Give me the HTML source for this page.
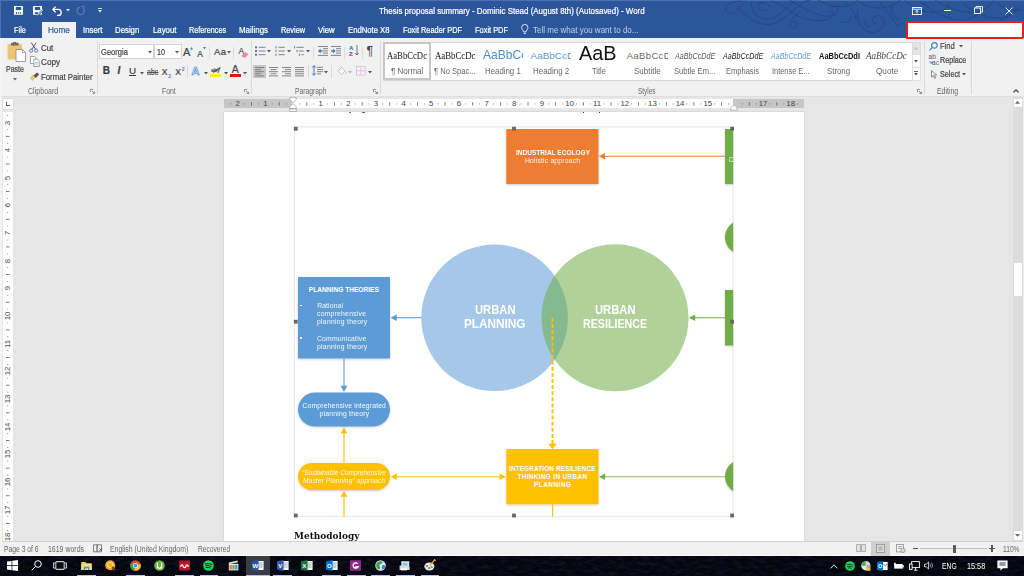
<!DOCTYPE html>
<html lang="en"><head>
<meta charset="utf-8">
<title>Thesis proposal summary - Word</title>
<style>
*{box-sizing:border-box;margin:0;padding:0}
html,body{width:1024px;height:576px;overflow:hidden;background:#e6e6e6}
body{position:relative;font-family:"Liberation Sans",sans-serif;font-size:8px;color:#444;line-height:1}
.a{position:absolute}
.t{position:absolute;white-space:nowrap;line-height:10px;height:10px}
svg{position:absolute;overflow:visible}
#titlebar{left:0;top:0;width:1024px;height:38px;background:#2b579a}
#titlebar .t{color:#fff;font-size:8.3px;-webkit-text-stroke:.2px currentColor}
#ribbon{left:0;top:38px;width:1024px;height:58.6px;background:#f1f1f1;border-bottom:1px solid #dedede}
#ribbon .t{font-size:8.3px;color:#444;-webkit-text-stroke:.2px currentColor}
#ribbon .g{color:#666;-webkit-text-stroke:0}
#ribbon .lb{margin-top:-.6px}
.sep{position:absolute;width:1px;background:#dadada}
#doc{left:0;top:97px;width:1024px;height:444px;background:#e6e6e6}
#page{left:224px;top:112px;width:580px;height:429px;background:#fff}
#status{left:0;top:541.2px;width:1024px;height:15px;background:#f1f1f1;border-top:1px solid #d2d2d2;border-bottom:1px solid #fafafa}
#status .t{font-size:8.3px;color:#666;top:2px}
#taskbar{left:0;top:556px;width:1024px;height:20px;background:#04050a}
</style>
</head>
<body>
<div id="titlebar" class="a">
  <div class="a" style="left:0;top:0;width:1024px;height:1px;background:#4a72ae"></div>
  <div class="a" style="left:0;top:0;width:1px;height:38px;background:#4a72ae"></div>
  <!-- decorative swirls -->
  <svg width="350" height="38" style="left:674px;top:0" viewBox="674 0 350 38" fill="none" stroke="#21467f" stroke-width="1" stroke-linecap="round" opacity="0.85">
    <path d="M742 1 C736 1 726 3 725.500 8.500 C725 13 731 14.500 735 12 C740 9 742 4 746 1"></path>
    <path d="M737 8 C746 13 752 24 766 24.500 C782 25 790 12 802 3 C805 1 808 0 811 0"></path>
    <path d="M752 2 C750 8 754 17 764 19 C776 21 784 10 793 2"></path>
    <path d="M756 4 C760 1 768 2 769 6 C770 10 764 12 760 9 C757 7 758 4 762 3"></path>
    <path d="M772 1 C782 4 790 12 798 16 C810 22 826 22 832 17 C836 13 832 10 828 12"></path>
    <path d="M800 12 C794 16 789 22 790 26 C791 30 797 29 797 25 C797 22 794 21 792 22"></path>
    <path d="M790 0 C800 6 812 14 824 16 C832 17 838 14 838 10 C838 6 832 5 829 8"></path>
    <path d="M818 0 C824 4 836 8 846 6 C852 5 856 2 858 0"></path>
    <path d="M842 22 C848 24 852 20 850 17"></path>
    <path d="M845 2 C852 8 856 14 856 20"></path>
    <path d="M858 10 C856 16 858 26 866 31 C874 35 884 30 884 22 C884 16 878 14 874 17 C870 20 873 25 877 23"></path>
    <path d="M866 20 C864 23 866 27 870 26"></path>
    <path d="M860 2 C868 8 880 10 890 6 C894 4 898 2 900 0"></path>
    <path d="M880 2 C886 10 892 18 896 24 C898 27 902 26 902 23"></path>
    <path d="M893 4 C890 10 892 18 900 20"></path>
    <path d="M905 0 C912 8 924 14 938 12 C946 11 950 6 948 2"></path>
    <path d="M920 2 C930 8 944 20 960 20 C972 20 980 14 988 6"></path>
    <path d="M935 0 C945 6 960 14 975 12 C984 11 990 6 994 0"></path>
    <path d="M962 2 C970 10 984 18 998 18 C1008 18 1016 12 1022 6"></path>
    <path d="M996 2 C1002 8 1012 12 1022 10"></path>
    <path d="M1000 20 C1008 18 1014 14 1016 8"></path>
  </svg>
  <!-- quick access toolbar icons -->
  <svg width="9" height="9" style="left:14.2px;top:5.6px" viewBox="0 0 9 9"><rect x="0" y="0" width="9" height="8.8" rx="0.6" fill="#fff"></rect><rect x="1.8" y="0.9" width="5.4" height="3.2" fill="#2b579a"></rect><rect x="1.8" y="6.2" width="5.4" height="1.7" fill="#2b579a"></rect><rect x="3" y="6.2" width="1.2" height="1.7" fill="#fff"></rect><rect x="5" y="6.2" width="1.2" height="1.7" fill="#fff"></rect></svg>
  <svg width="11" height="10" style="left:33.2px;top:5.6px" viewBox="0 0 11 10"><rect x="0" y="0" width="9" height="8.8" rx="0.6" fill="#fff"></rect><rect x="1.8" y="0.9" width="5.4" height="3.2" fill="#2b579a"></rect><rect x="1.8" y="6.2" width="3" height="1.7" fill="#2b579a"></rect><path d="M4.4 9.4l5.4-5.4" stroke="#2b579a" stroke-width="2.2"></path><path d="M4.2 9.4l5.8-5.8" stroke="#fff" stroke-width="1"></path></svg>
  <svg width="11" height="10" style="left:52px;top:6px" viewBox="0 0 11 10" fill="none" stroke="#fff" stroke-width="1.3"><path d="M1 3.4h5.2a3 3 0 0 1 0 6H5"></path><path d="M3.6 0.6L0.9 3.4l2.7 2.8"></path></svg>
  <svg width="4" height="3" style="left:66px;top:9px" viewBox="0 0 4 3"><path d="M0 0h4l-2 2.4z" fill="#dfe6f1"></path></svg>
  <svg width="10" height="10" style="left:76px;top:6px" viewBox="0 0 10 10" fill="none" stroke="#5c7fb4" stroke-width="1.1"><path d="M4 1.4a3.6 3.6 0 1 0 3.4 1.4"></path><path d="M5 0.5h3v3"></path></svg>
  <svg width="4" height="5" style="left:98px;top:8px" viewBox="0 0 4 5"><rect x="0" y="0" width="4" height="0.9" fill="#dfe6f1"></rect><path d="M0 2h4l-2 2.4z" fill="#dfe6f1"></path></svg>
  <!-- title -->
  <div class="t" style="top: 6px; left: 378.5px; transform: scaleX(0.956); transform-origin: 0px 50%;">Thesis proposal summary - Dominic Stead (August 8th) (Autosaved) - Word</div>
  <!-- window controls -->
  <svg width="10" height="8" style="left:912px;top:7px" viewBox="0 0 10 8" fill="none" stroke="#fff" stroke-width="0.9"><rect x="0.5" y="0.5" width="9" height="7"></rect><path d="M0.5 2.2h9"></path><path d="M5 6.4V3.4M3.6 4.8L5 3.4l1.4 1.4"></path></svg>
  <div class="a" style="left:944px;top:10px;width:7px;height:1px;background:#fff"></div>
  <svg width="9" height="8" style="left:974px;top:6px" viewBox="0 0 9 8" fill="none" stroke="#fff" stroke-width="0.9"><rect x="0.5" y="2" width="6" height="5.5"></rect><path d="M2 2V0.5h6.5v5.5H6.5"></path></svg>
  <svg width="8" height="8" style="left:1005px;top:7px" viewBox="0 0 8 8" fill="none" stroke="#fff" stroke-width="0.9"><path d="M0.5 0.5l7 7M7.5 0.5l-7 7"></path></svg>
  <!-- redacted account box -->
  <div class="a" style="left:906px;top:21.2px;width:118.3px;height:17.6px;background:#fff;border:2px solid #ee1c1c;z-index:5"></div>
  <!-- tabs -->
  <div class="a" style="left:42px;top:22px;width:34px;height:16px;background:#f1f1f1"></div>
  <div class="t tab" style="top: 25px; left: 14px; transform: scaleX(0.897); transform-origin: 0px 50%;">File</div>
  <div class="t tab" style="top: 25px; color: rgb(43, 87, 154); left: 48px; transform: scaleX(0.98); transform-origin: 0px 50%;">Home</div>
  <div class="t tab" style="top: 25px; left: 82.5px; transform: scaleX(0.939); transform-origin: 0px 50%;">Insert</div>
  <div class="t tab" style="top: 25px; left: 115px; transform: scaleX(0.941); transform-origin: 0px 50%;">Design</div>
  <div class="t tab" style="top: 25px; left: 152.5px; transform: scaleX(0.943); transform-origin: 0px 50%;">Layout</div>
  <div class="t tab" style="top: 25px; left: 188.7px; transform: scaleX(0.874); transform-origin: 0px 50%;">References</div>
  <div class="t tab" style="top: 25px; left: 239px; transform: scaleX(0.953); transform-origin: 0px 50%;">Mailings</div>
  <div class="t tab" style="top: 25px; left: 281px; transform: scaleX(0.882); transform-origin: 0px 50%;">Review</div>
  <div class="t tab" style="top: 25px; left: 318px; transform: scaleX(0.936); transform-origin: 0px 50%;">View</div>
  <div class="t tab" style="top: 25px; left: 347.5px; transform: scaleX(0.927); transform-origin: 0px 50%;">EndNote X8</div>
  <div class="t tab" style="top: 25px; left: 402.5px; transform: scaleX(0.888); transform-origin: 0px 50%;">Foxit Reader PDF</div>
  <div class="t tab" style="top: 25px; left: 475px; transform: scaleX(0.895); transform-origin: 0px 50%;">Foxit PDF</div>
  <svg width="7.6" height="11" style="left:521.2px;top:24px" viewBox="0 0 7 10" fill="none" stroke="#e6ecf5" stroke-width="0.85"><path d="M2.3 7.2C2.3 5.6 0.6 5 0.6 3.2a2.9 2.9 0 0 1 5.8 0C6.4 5 4.7 5.6 4.7 7.2z"></path><path d="M2.4 8.6h2.2"></path></svg>
  <div class="t tab" style="top: 25px; color: rgb(195, 208, 230); -webkit-text-stroke: 0px; left: 532.5px; transform: scaleX(0.965); transform-origin: 0px 50%;">Tell me what you want to do...</div>
</div>
<div id="ribbon" class="a">
<!-- coordinates inside ribbon are page-y minus 38 -->
<!-- Clipboard -->
<svg width="20" height="20" style="left:7px;top:4px" viewBox="0 0 20 20">
  <rect x="0.5" y="2" width="14.5" height="15.5" rx="0.8" fill="#edc374"></rect>
  <rect x="4" y="0.8" width="7.5" height="2.6" rx="0.5" fill="#6b6b6b"></rect>
  <rect x="6.2" y="0" width="3" height="1.6" rx="0.5" fill="#6b6b6b"></rect>
  <path d="M9 7.5h6.5l3 3V19.5H9z" fill="#fff" stroke="#8a8a8a" stroke-width="0.8"></path>
  <path d="M15.5 7.5v3h3" fill="none" stroke="#8a8a8a" stroke-width="0.7"></path>
</svg>
<div class="t" style="top: 26px; left: 6px; transform: scaleX(0.848); transform-origin: 0px 50%;">Paste</div>
<svg width="4" height="3" style="left:13px;top:40px" viewBox="0 0 4 3"><path d="M0 0h4l-2 2.4z" fill="#666"></path></svg>
<svg width="10" height="11" style="left:29px;top:4px" viewBox="0 0 10 11" fill="none"><path d="M2.2 0.6l4.6 7M7.2 0.6l-4.6 7" stroke="#555" stroke-width="1"></path><circle cx="2.2" cy="8.6" r="1.6" stroke="#3f7fbf" stroke-width="0.9"></circle><circle cx="7.2" cy="8.6" r="1.6" stroke="#3f7fbf" stroke-width="0.9"></circle></svg>
<div class="t" style="top: 5px; left: 41px; transform: scaleX(0.952); transform-origin: 0px 50%;">Cut</div>
<svg width="10" height="11" style="left:30px;top:18px" viewBox="0 0 10 11"><path d="M0.5 0.5h3.8l1.6 1.6V7.5H0.5z" fill="#fff" stroke="#8a8a8a" stroke-width="0.8"></path><path d="M3.8 3.2h3.8l1.6 1.6V10.5H3.8z" fill="#fff" stroke="#8a8a8a" stroke-width="0.8"></path><path d="M5 6.4h3M5 8h3" stroke="#7fa8d6" stroke-width="0.7"></path></svg>
<div class="t" style="top: 19px; left: 41px; transform: scaleX(0.981); transform-origin: 0px 50%;">Copy</div>
<svg width="11" height="10" style="left:29px;top:34px" viewBox="0 0 11 10"><path d="M0.6 6l3-3.2 3 2.8-3 3.4z" fill="#edc374"></path><path d="M4.4 3.4l3.8-3 2 2-3.4 3.6z" fill="#555"></path></svg>
<div class="t" style="top: 33.5px; left: 41px; transform: scaleX(0.938); transform-origin: 0px 50%;">Format Painter</div>
<div class="t g" style="top: 48.2px; left: 28.3px; transform: scaleX(0.853); transform-origin: 0px 50%;">Clipboard</div>
<svg width="5" height="5" style="left:90px;top:51px" viewBox="0 0 5 5" fill="none" stroke="#777" stroke-width="0.8"><path d="M0.4 3V0.4H3"></path><path d="M2 2l2.4 2.4M4.6 2.6v2h-2"></path></svg>
<div class="sep" style="left:97px;top:3px;height:53px"></div>

<!-- Font -->
<div class="a" style="left:99px;top:6px;width:55px;height:15px;background:#fff;border:1px solid #d4d4d4"></div>
<div class="a" style="left:154px;top:6px;width:28px;height:15px;background:#fff;border:1px solid #d4d4d4"></div>
<div class="t" style="top: 9px; left: 101px; transform: scaleX(0.914); transform-origin: 0px 50%;">Georgia</div>
<svg width="4" height="3" style="left:148px;top:13px" viewBox="0 0 4 3"><path d="M0 0h4l-2 2.4z" fill="#555"></path></svg>
<div class="t" style="top: 9px; left: 156.5px; transform: scaleX(0.866); transform-origin: 0px 50%;">10</div>
<svg width="4" height="3" style="left:175px;top:13px" viewBox="0 0 4 3"><path d="M0 0h4l-2 2.4z" fill="#555"></path></svg>
<div class="t" style="left:183px;top:8.2px;font-size:11px;line-height:12px;height:12px;color:#444">A</div>
<svg width="3" height="3" style="left:189.5px;top:9px" viewBox="0 0 3 3"><path d="M0 2.4h3l-1.5-2.4z" fill="#3f7fbf"></path></svg>
<div class="t" style="left:197.2px;top:10.6px;font-size:8.4px;color:#444">A</div>
<svg width="3" height="3" style="left:203px;top:9px" viewBox="0 0 3 3"><path d="M0 0h3l-1.5 2.4z" fill="#3f7fbf"></path></svg>
<div class="sep" style="left:209px;top:9px;height:12px"></div>
<div class="t" style="top: 9px; font-size: 9.5px; left: 214px; letter-spacing: 0.38px;">Aa</div>
<svg width="4" height="3" style="left:226.5px;top:13px" viewBox="0 0 4 3"><path d="M0 0h4l-2 2.4z" fill="#555"></path></svg>
<div class="sep" style="left:233px;top:9px;height:12px"></div>
<div class="t" style="left:238.5px;top:8px;font-size:8.5px;color:#555">A</div>
<svg width="8" height="6" style="left:240.5px;top:13.5px" viewBox="0 0 8 6"><path d="M0.2 4l4.2-4 3.2 2.4-4 3.6z" fill="#ea8aa0"></path></svg>

<div class="t" style="left:102.8px;top:27.3px;font-size:10px;line-height:12px;height:12px;font-weight:bold;color:#3b3b3b">B</div>
<div class="t" style="left:117.4px;top:27.3px;font-size:10px;line-height:12px;height:12px;font-style:italic;font-weight:bold;color:#3b3b3b">I</div>
<div class="t" style="left:129px;top:27.3px;font-size:9.8px;line-height:12px;height:12px;text-decoration:underline;color:#3b3b3b">U</div>
<svg width="4" height="3" style="left:140px;top:34px" viewBox="0 0 4 3"><path d="M0 0h4l-2 2.4z" fill="#555"></path></svg>
<div class="t" style="top: 28.6px; font-size: 8.4px; text-decoration: line-through; color: rgb(85, 85, 85); left: 146.8px; transform: scaleX(0.843); transform-origin: 0px 50%;">abc</div>
<div class="t" style="left:161.8px;top:28.8px;font-size:8.6px;color:#3b3b3b">X</div>
<div class="t" style="left:168.2px;top:32.6px;font-size:5px;color:#3f7fbf">2</div>
<div class="t" style="left:175.3px;top:28.8px;font-size:8.6px;color:#3b3b3b">X</div>
<div class="t" style="left:181.8px;top:25.8px;font-size:5px;color:#3f7fbf">2</div>
<div class="sep" style="left:187px;top:27px;height:13px"></div>
<div class="t" style="left:191.6px;top:27.2px;font-size:11px;line-height:12px;height:12px;font-weight:bold;color:#e4eefb;-webkit-text-stroke:.7px #4a8ad4">A</div>
<svg width="4" height="3" style="left:203.5px;top:34px" viewBox="0 0 4 3"><path d="M0 0h4l-2 2.4z" fill="#555"></path></svg>
<div class="t" style="left:211px;top:26.5px;font-size:5.5px;color:#555">aby</div>
<svg width="9" height="6" style="left:212px;top:29px" viewBox="0 0 9 6"><path d="M1 5.4L8.4 0.6" stroke="#555" stroke-width="1.3"></path></svg>
<div class="a" style="left:210.4px;top:36px;width:11px;height:3px;background:#fff200"></div>
<svg width="4" height="3" style="left:223.5px;top:34px" viewBox="0 0 4 3"><path d="M0 0h4l-2 2.4z" fill="#555"></path></svg>
<div class="t" style="left:231.8px;top:26.2px;font-size:10.4px;line-height:11px;height:11px;color:#444">A</div>
<div class="a" style="left:230px;top:36px;width:11px;height:3px;background:#ee1111"></div>
<svg width="4" height="3" style="left:243px;top:34px" viewBox="0 0 4 3"><path d="M0 0h4l-2 2.4z" fill="#555"></path></svg>
<div class="t g" style="top: 48.2px; left: 162.3px; transform: scaleX(0.825); transform-origin: 0px 50%;">Font</div>
<svg width="5" height="5" style="left:244px;top:51px" viewBox="0 0 5 5" fill="none" stroke="#777" stroke-width="0.8"><path d="M0.4 3V0.4H3"></path><path d="M2 2l2.4 2.4M4.6 2.6v2h-2"></path></svg>
<div class="sep" style="left:251px;top:3px;height:53px"></div>

<!-- Paragraph -->
<svg width="11" height="10" style="left:254.5px;top:7.7px" viewBox="0 0 11 10"><g fill="#3f7fbf"><rect x="0" y="0.3" width="2" height="2"></rect><rect x="0" y="4" width="2" height="2"></rect><rect x="0" y="7.7" width="2" height="2"></rect></g><g stroke="#777" stroke-width="0.9"><path d="M3.6 1.3H10.5M3.6 5H10.5M3.6 8.7H10.5"></path></g></svg><svg width="4" height="3" style="left:267.3px;top:12.2px" viewBox="0 0 4 3"><path d="M0 0h4l-2 2.4z" fill="#555"></path></svg><svg width="10" height="10" style="left:274.5px;top:7.7px" viewBox="0 0 10 10"><g stroke="#3f7fbf" stroke-width="0.9"><path d="M1 0v2.4M1 3.8v2.4M1 7.6V10"></path></g><g stroke="#777" stroke-width="0.9"><path d="M3.4 1.3H9.8M3.4 5H9.8M3.4 8.7H9.8"></path></g></svg><svg width="4" height="3" style="left:286.8px;top:12.2px" viewBox="0 0 4 3"><path d="M0 0h4l-2 2.4z" fill="#555"></path></svg><svg width="10" height="10" style="left:294px;top:7.7px" viewBox="0 0 10 10"><g stroke="#3f7fbf" stroke-width="0.9"><path d="M0.6 0v2.4M3 3.8v2.4M5.4 7.6V10"></path></g><g stroke="#777" stroke-width="0.9"><path d="M2.4 1.3H9.8M4.8 5H9.8M7.2 8.7H9.8"></path></g></svg><svg width="4" height="3" style="left:305.5px;top:12.2px" viewBox="0 0 4 3"><path d="M0 0h4l-2 2.4z" fill="#555"></path></svg><div class="sep" style="left:313px;top:9px;height:12px"></div><svg width="10" height="10" style="left:317.5px;top:7.7px" viewBox="0 0 10 10"><g stroke="#777" stroke-width="0.9"><path d="M0 0.5H10M5 2.7H10M5 4.9H10M5 7.1H10M0 9.4H10"></path></g><path d="M0 5l2.6-2.4v1.6H4.6v1.6H2.6v1.6z" fill="#3f7fbf"></path></svg><svg width="10" height="10" style="left:331px;top:7.7px" viewBox="0 0 10 10"><g stroke="#777" stroke-width="0.9"><path d="M0 0.5H10M5 2.7H10M5 4.9H10M5 7.1H10M0 9.4H10"></path></g><path d="M4.6 5L2 2.6v1.6H0v1.6H2v1.6z" fill="#3f7fbf"></path></svg><div class="sep" style="left:344px;top:9px;height:12px"></div><div class="t" style="left:349px;top:6.5px;font-size:6px;line-height:6px;height:6px;color:#3f7fbf;font-weight:bold">A</div><div class="t" style="left:349px;top:12.5px;font-size:6px;line-height:6px;height:6px;color:#8b3fa8;font-weight:bold">Z</div><svg width="4" height="11" style="left:354.5px;top:7.2px" viewBox="0 0 4 11" fill="none" stroke="#666" stroke-width="0.9"><path d="M2 0v10M0.3 8l1.7 2 1.7-2"></path></svg><div class="sep" style="left:362px;top:9px;height:12px"></div><div class="t" style="left:366.6px;top:6.6px;font-size:12.5px;line-height:13px;height:13px;color:#444;-webkit-text-stroke:0">¶</div><div class="a" style="left:253.4px;top:26.6px;width:13px;height:13.6px;background:#c6c6c6"></div><svg width="9" height="11.5" style="left:255.4px;top:28.5px" viewBox="0 0 9 11.5" stroke="#777" stroke-width="0.9"><path d="M0 0.5h9"></path><path d="M0 2.6h6"></path><path d="M0 4.7h9"></path><path d="M0 6.800000000000001h6"></path><path d="M0 8.9h9"></path></svg><svg width="9" height="11.5" style="left:269px;top:28.5px" viewBox="0 0 9 11.5" stroke="#777" stroke-width="0.9"><path d="M0 0.5h9"></path><path d="M1.5 2.6h6"></path><path d="M0 4.7h9"></path><path d="M1.5 6.800000000000001h6"></path><path d="M0 8.9h9"></path></svg><svg width="9" height="11.5" style="left:282px;top:28.5px" viewBox="0 0 9 11.5" stroke="#777" stroke-width="0.9"><path d="M0 0.5h9"></path><path d="M3 2.6h6"></path><path d="M0 4.7h9"></path><path d="M3 6.800000000000001h6"></path><path d="M0 8.9h9"></path></svg><svg width="9" height="11.5" style="left:295.3px;top:28.5px" viewBox="0 0 9 11.5" stroke="#777" stroke-width="0.9"><path d="M0 0.5h9"></path><path d="M0 2.6h9"></path><path d="M0 4.7h9"></path><path d="M0 6.800000000000001h9"></path><path d="M0 8.9h9"></path></svg><div class="sep" style="left:308px;top:27px;height:13px"></div><svg width="11" height="11" style="left:312px;top:27.2px" viewBox="0 0 11 11"><g stroke="#3f7fbf" stroke-width="1" fill="none"><path d="M2 0.8v9.4M0.2 2.6L2 0.6l1.8 2M0.2 8.4L2 10.4l1.8-2"></path></g><g stroke="#777" stroke-width="0.9"><path d="M5 2.3h6M5 4.5h6M5 6.7h6M5 8.9h4"></path></g></svg><svg width="4" height="3" style="left:324.3px;top:33.2px" viewBox="0 0 4 3"><path d="M0 0h4l-2 2.4z" fill="#555"></path></svg><div class="sep" style="left:331px;top:27px;height:13px"></div><svg width="10" height="10" style="left:337px;top:27.7px" viewBox="0 0 10 10" fill="none" stroke="#bdbdbd" stroke-width="0.9"><path d="M1 5.2L4.6 1.4l3.4 3.4L4.6 8.6z" fill="#fafafa"></path><path d="M4.6 1.4L3.4 0.4M8.6 5.6c0.6 1 0.8 1.8 0.2 2.2"></path></svg><svg width="4" height="3" style="left:348.3px;top:33.2px" viewBox="0 0 4 3"><path d="M0 0h4l-2 2.4z" fill="#b5b5b5"></path></svg><svg width="10" height="10" style="left:355.5px;top:27.7px" viewBox="0 0 10 10" fill="#faf2f8" stroke="#d9c3d6" stroke-width="0.9"><rect x="0.5" y="0.5" width="8.6" height="8.6"></rect><path d="M4.8 0.5v8.6M0.5 4.8h8.6"></path></svg><svg width="4" height="3" style="left:368px;top:33.2px" viewBox="0 0 4 3"><path d="M0 0h4l-2 2.4z" fill="#555"></path></svg><div class="t g" style="top: 48.2px; left: 294.6px; transform: scaleX(0.81); transform-origin: 0px 50%;">Paragraph</div><svg width="5" height="5" style="left:372.5px;top:51px" viewBox="0 0 5 5" fill="none" stroke="#777" stroke-width="0.8"><path d="M0.4 3V0.4H3"></path><path d="M2 2l2.4 2.4M4.6 2.6v2h-2"></path></svg><div class="sep" style="left:380px;top:3px;height:53px"></div>
<!-- Styles -->
<div class="a" style="left:382.5px;top:3.5px;width:538px;height:39px;background:#fff;border:1px solid #d8d8d8"></div><div class="a" style="left:382.5px;top:3.5px;width:48.5px;height:38.5px;border:2px solid #c6c6c6;background:#fff"></div><div class="t" style="top: 10.5px; line-height: 14px; height: 14px; font-family: &quot;Liberation Serif&quot;, serif; font-size: 9.6px; color: rgb(17, 17, 17); -webkit-text-stroke: 0px; left: 387px; transform: scaleX(0.904); transform-origin: 0px 50%;">AaBbCcDc</div><div class="t g lb" style="top: 28.5px; left: 391px; transform: scaleX(0.964); transform-origin: 0px 50%;">¶ Normal</div><div class="t" style="top: 10.5px; line-height: 14px; height: 14px; font-family: &quot;Liberation Serif&quot;, serif; font-size: 9.6px; color: rgb(17, 17, 17); -webkit-text-stroke: 0px; left: 434.5px; transform: scaleX(0.916); transform-origin: 0px 50%;">AaBbCcDc</div><div class="t g lb" style="top: 28.5px; left: 434px; transform: scaleX(0.912); transform-origin: 0px 50%;">¶ No Spac...</div><div class="a" style="left:0;top:0;width:523.4px;height:59px;overflow:hidden"><div class="t" style="top: 9.7px; line-height: 14px; height: 14px; font-size: 12.6px; color: rgb(74, 143, 208); -webkit-text-stroke: 0px; left: 482.8px; transform: scaleX(0.957); transform-origin: 0px 50%;">AaBbCc</div></div><div class="t g lb" style="top: 28.5px; left: 484.8px; transform: scaleX(0.946); transform-origin: 0px 50%;">Heading 1</div><div class="a" style="left:0;top:0;width:571.3px;height:59px;overflow:hidden"><div class="t" style="top: 10.5px; line-height: 14px; height: 14px; font-size: 9.9px; color: rgb(91, 155, 213); -webkit-text-stroke: 0px; left: 530.6px; letter-spacing: 0.01px;">AaBbCcD</div></div><div class="t g lb" style="top: 28.5px; left: 532.8px; transform: scaleX(0.957); transform-origin: 0px 50%;">Heading 2</div><div class="t g lb" style="top: 28.5px; left: 592px; transform: scaleX(0.911); transform-origin: 0px 50%;">Title</div><div class="a" style="left:0;top:0;width:667.6px;height:59px;overflow:hidden"><div class="t" style="top: 10.5px; line-height: 14px; height: 14px; font-size: 9.4px; color: rgb(106, 106, 106); -webkit-text-stroke: 0px; left: 626.8px; letter-spacing: 0.42px;">AaBbCcD</div></div><div class="t g lb" style="top: 28.5px; left: 633.6px; transform: scaleX(0.964); transform-origin: 0px 50%;">Subtitle</div><div class="t" style="top: 10.5px; line-height: 14px; height: 14px; font-size: 9.4px; font-style: italic; color: rgb(85, 85, 85); -webkit-text-stroke: 0px; left: 675px; transform: scaleX(0.766); transform-origin: 0px 50%;">AaBbCcDdE</div><div class="t g lb" style="top: 28.5px; left: 674px; transform: scaleX(0.914); transform-origin: 0px 50%;">Subtle Em...</div><div class="t" style="top: 10.5px; line-height: 14px; height: 14px; font-size: 9.4px; font-style: italic; color: rgb(34, 34, 34); -webkit-text-stroke: 0px; left: 722.8px; transform: scaleX(0.764); transform-origin: 0px 50%;">AaBbCcDdE</div><div class="t g lb" style="top: 28.5px; left: 726px; transform: scaleX(0.906); transform-origin: 0px 50%;">Emphasis</div><div class="t" style="top: 10.5px; line-height: 14px; height: 14px; font-size: 9.4px; font-style: italic; color: rgb(91, 155, 213); -webkit-text-stroke: 0px; left: 771px; transform: scaleX(0.76); transform-origin: 0px 50%;">AaBbCcDdE</div><div class="t g lb" style="top: 28.5px; left: 772.3px; transform: scaleX(0.893); transform-origin: 0px 50%;">Intense E...</div><div class="t" style="top: 10.5px; line-height: 14px; height: 14px; font-size: 9.2px; font-weight: bold; color: rgb(17, 17, 17); -webkit-text-stroke: 0px; left: 818.5px; transform: scaleX(0.811); transform-origin: 0px 50%;">AaBbCcDdI</div><div class="t g lb" style="top: 28.5px; left: 827px; transform: scaleX(0.941); transform-origin: 0px 50%;">Strong</div><div class="t" style="top: 10.5px; line-height: 14px; height: 14px; font-family: &quot;Liberation Serif&quot;, serif; font-size: 9.6px; font-style: italic; color: rgb(68, 68, 68); -webkit-text-stroke: 0px; left: 866.3px; transform: scaleX(0.943); transform-origin: 0px 50%;">AaBbCcDc</div><div class="t g lb" style="top: 28.5px; left: 875.7px; transform: scaleX(0.986); transform-origin: 0px 50%;">Quote</div><div class="t" style="top: 3.6px; font-size: 20.5px; line-height: 22px; height: 22px; color: rgb(17, 17, 17); -webkit-text-stroke: 0px; left: 579px; transform: scaleX(0.968); transform-origin: 0px 50%;">AaB</div><div class="a" style="left:911.5px;top:3.5px;width:9px;height:13px;background:#e4e4e4;border:1px solid #dcdcdc"></div><div class="a" style="left:911.5px;top:16px;width:9px;height:13.5px;background:#fff;border:1px solid #dedede"></div><div class="a" style="left:911.5px;top:29px;width:9px;height:13.5px;background:#fff;border:1px solid #dedede"></div><svg width="4" height="3" style="left:914px;top:9px" viewBox="0 0 4 3"><path d="M0 2.4h4l-2-2.4z" fill="#bdbdbd"></path></svg><svg width="4" height="3" style="left:914px;top:22px" viewBox="0 0 4 3"><path d="M0 0h4l-2 2.4z" fill="#555"></path></svg><svg width="4" height="5" style="left:914px;top:33px" viewBox="0 0 4 5"><rect x="0" y="0" width="4" height="0.9" fill="#555"></rect><path d="M0 2h4l-2 2.4z" fill="#555"></path></svg><div class="t g" style="top: 48.2px; left: 638px; transform: scaleX(0.775); transform-origin: 0px 50%;">Styles</div><svg width="5" height="5" style="left:917px;top:51px" viewBox="0 0 5 5" fill="none" stroke="#777" stroke-width="0.8"><path d="M0.4 3V0.4H3"></path><path d="M2 2l2.4 2.4M4.6 2.6v2h-2"></path></svg><div class="sep" style="left:924px;top:3px;height:53px"></div>
<!-- Editing -->
<svg width="9" height="9" style="left:928.8px;top:3.5px" viewBox="0 0 9 9" fill="none" stroke="#3f7fbf" stroke-width="1.2"><circle cx="5.4" cy="3.4" r="2.8"></circle><path d="M3.4 5.4L0.5 8.4"></path></svg><div class="t" style="top: 3px; left: 940px; transform: scaleX(0.905); transform-origin: 0px 50%;">Find</div><svg width="4" height="3" style="left:959px;top:7px" viewBox="0 0 4 3"><path d="M0 0h4l-2 2.4z" fill="#555"></path></svg><div class="t" style="left:928.5px;top:15px;font-size:6.5px;line-height:7px;height:7px;color:#555;-webkit-text-stroke:0">a<span style="color:#8b3fa8">b</span></div><div class="t" style="left:932px;top:20.5px;font-size:6.5px;line-height:7px;height:7px;color:#555;-webkit-text-stroke:0">a<span style="color:#3f7fbf">c</span></div><svg width="4" height="3" style="left:928.5px;top:23px" viewBox="0 0 4 3" fill="none" stroke="#3f7fbf" stroke-width="0.8"><path d="M0 0.6L3.4 2M3.4 0.4v1.8H1.4"></path></svg><div class="t" style="top: 17px; left: 940px; transform: scaleX(0.864); transform-origin: 0px 50%;">Replace</div><svg width="7" height="9" style="left:930.5px;top:32px" viewBox="0 0 7 9" fill="#fff" stroke="#777" stroke-width="0.8"><path d="M0.5 0.5v6.6l1.8-1.6 1.4 3 1-0.5L3.3 5h2.4z"></path></svg><div class="t" style="top: 31px; left: 940px; transform: scaleX(0.867); transform-origin: 0px 50%;">Select</div><svg width="4" height="3" style="left:962px;top:35px" viewBox="0 0 4 3"><path d="M0 0h4l-2 2.4z" fill="#555"></path></svg><div class="t g" style="top: 48.2px; left: 937.3px; transform: scaleX(0.835); transform-origin: 0px 50%;">Editing</div><div class="sep" style="left:971px;top:3px;height:53px"></div><svg width="6" height="4" style="left:1013px;top:51px" viewBox="0 0 6 4" fill="none" stroke="#444" stroke-width="1.3"><path d="M0.4 3.4L3 0.8l2.6 2.6"></path></svg>
</div>
<style>.rn{font-size:7.8px;color:#444;line-height:10px;height:10px}</style>
<div id="doc" class="a"></div>
<div class="a" style="left:0;top:38px;width:1.6px;height:518px;background:#f4f4f4;z-index:6"></div>
<div class="a" style="left:1023px;top:38px;width:1px;height:518px;background:#efefef;z-index:6"></div>
<div id="page" class="a" style="left:223.75px;top:111.75px;width:580px;height:430px;box-shadow:0 0 0 .6px #d2d2d2"></div>
<div class="a" style="left:223.5px;top:99.25px;width:580.25px;height:8.75px;background:#c6c6c6"></div>
<div class="a" style="left:292.25px;top:99.25px;width:441px;height:8.75px;background:#fff"></div>
<div class="t rn" style="left:227.70px;top:98.6px;width:20px;text-align:center">2</div>
<div class="t rn" style="left:255.35px;top:98.6px;width:20px;text-align:center">1</div>
<div class="t rn" style="left:310.65px;top:98.6px;width:20px;text-align:center">1</div>
<div class="t rn" style="left:338.30px;top:98.6px;width:20px;text-align:center">2</div>
<div class="t rn" style="left:365.95px;top:98.6px;width:20px;text-align:center">3</div>
<div class="t rn" style="left:393.60px;top:98.6px;width:20px;text-align:center">4</div>
<div class="t rn" style="left:421.25px;top:98.6px;width:20px;text-align:center">5</div>
<div class="t rn" style="left:448.90px;top:98.6px;width:20px;text-align:center">6</div>
<div class="t rn" style="left:476.55px;top:98.6px;width:20px;text-align:center">7</div>
<div class="t rn" style="left:504.20px;top:98.6px;width:20px;text-align:center">8</div>
<div class="t rn" style="left:531.85px;top:98.6px;width:20px;text-align:center">9</div>
<div class="t rn" style="left:559.50px;top:98.6px;width:20px;text-align:center">10</div>
<div class="t rn" style="left:587.15px;top:98.6px;width:20px;text-align:center">11</div>
<div class="t rn" style="left:614.80px;top:98.6px;width:20px;text-align:center">12</div>
<div class="t rn" style="left:642.45px;top:98.6px;width:20px;text-align:center">13</div>
<div class="t rn" style="left:670.10px;top:98.6px;width:20px;text-align:center">14</div>
<div class="t rn" style="left:697.75px;top:98.6px;width:20px;text-align:center">15</div>
<div class="t rn" style="left:753.05px;top:98.6px;width:20px;text-align:center">17</div>
<div class="t rn" style="left:780.70px;top:98.6px;width:20px;text-align:center">18</div>
<svg width="1024" height="16" style="left:0;top:97.8px" viewBox="0 0 1024 16"><g transform="translate(0,0)" fill="#5a5a5a"><rect x="230.39" y="5.5" width="0.8" height="0.9"></rect><rect x="244.21" y="5.5" width="0.8" height="0.9"></rect><rect x="251.12" y="4.2" width="0.8" height="3.4"></rect><rect x="258.04" y="5.5" width="0.8" height="0.9"></rect><rect x="271.86" y="5.5" width="0.8" height="0.9"></rect><rect x="278.78" y="4.2" width="0.8" height="3.4"></rect><rect x="285.69" y="5.5" width="0.8" height="0.9"></rect><rect x="299.51" y="5.5" width="0.8" height="0.9"></rect><rect x="306.43" y="4.2" width="0.8" height="3.4"></rect><rect x="313.34" y="5.5" width="0.8" height="0.9"></rect><rect x="327.16" y="5.5" width="0.8" height="0.9"></rect><rect x="334.08" y="4.2" width="0.8" height="3.4"></rect><rect x="340.99" y="5.5" width="0.8" height="0.9"></rect><rect x="354.81" y="5.5" width="0.8" height="0.9"></rect><rect x="361.73" y="4.2" width="0.8" height="3.4"></rect><rect x="368.64" y="5.5" width="0.8" height="0.9"></rect><rect x="382.46" y="5.5" width="0.8" height="0.9"></rect><rect x="389.38" y="4.2" width="0.8" height="3.4"></rect><rect x="396.29" y="5.5" width="0.8" height="0.9"></rect><rect x="410.11" y="5.5" width="0.8" height="0.9"></rect><rect x="417.03" y="4.2" width="0.8" height="3.4"></rect><rect x="423.94" y="5.5" width="0.8" height="0.9"></rect><rect x="437.76" y="5.5" width="0.8" height="0.9"></rect><rect x="444.68" y="4.2" width="0.8" height="3.4"></rect><rect x="451.59" y="5.5" width="0.8" height="0.9"></rect><rect x="465.41" y="5.5" width="0.8" height="0.9"></rect><rect x="472.33" y="4.2" width="0.8" height="3.4"></rect><rect x="479.24" y="5.5" width="0.8" height="0.9"></rect><rect x="493.06" y="5.5" width="0.8" height="0.9"></rect><rect x="499.98" y="4.2" width="0.8" height="3.4"></rect><rect x="506.89" y="5.5" width="0.8" height="0.9"></rect><rect x="520.71" y="5.5" width="0.8" height="0.9"></rect><rect x="527.62" y="4.2" width="0.8" height="3.4"></rect><rect x="534.54" y="5.5" width="0.8" height="0.9"></rect><rect x="548.36" y="5.5" width="0.8" height="0.9"></rect><rect x="555.27" y="4.2" width="0.8" height="3.4"></rect><rect x="562.19" y="5.5" width="0.8" height="0.9"></rect><rect x="576.01" y="5.5" width="0.8" height="0.9"></rect><rect x="582.93" y="4.2" width="0.8" height="3.4"></rect><rect x="589.84" y="5.5" width="0.8" height="0.9"></rect><rect x="603.66" y="5.5" width="0.8" height="0.9"></rect><rect x="610.57" y="4.2" width="0.8" height="3.4"></rect><rect x="617.49" y="5.5" width="0.8" height="0.9"></rect><rect x="631.31" y="5.5" width="0.8" height="0.9"></rect><rect x="638.23" y="4.2" width="0.8" height="3.4"></rect><rect x="645.14" y="5.5" width="0.8" height="0.9"></rect><rect x="658.96" y="5.5" width="0.8" height="0.9"></rect><rect x="665.88" y="4.2" width="0.8" height="3.4"></rect><rect x="672.79" y="5.5" width="0.8" height="0.9"></rect><rect x="686.61" y="5.5" width="0.8" height="0.9"></rect><rect x="693.52" y="4.2" width="0.8" height="3.4"></rect><rect x="700.44" y="5.5" width="0.8" height="0.9"></rect><rect x="714.26" y="5.5" width="0.8" height="0.9"></rect><rect x="721.18" y="4.2" width="0.8" height="3.4"></rect><rect x="728.09" y="5.5" width="0.8" height="0.9"></rect><rect x="741.91" y="5.5" width="0.8" height="0.9"></rect><rect x="748.82" y="4.2" width="0.8" height="3.4"></rect><rect x="755.74" y="5.5" width="0.8" height="0.9"></rect><rect x="769.56" y="5.5" width="0.8" height="0.9"></rect><rect x="776.48" y="4.2" width="0.8" height="3.4"></rect><rect x="783.39" y="5.5" width="0.8" height="0.9"></rect><rect x="797.21" y="5.5" width="0.8" height="0.9"></rect></g></svg>
<svg width="8" height="16" style="left:289px;top:97px" viewBox="0 0 8 16" fill="#fff" stroke="#9a9a9a" stroke-width="0.7"><path d="M0.8 0.6h6.4v2L4 5.6 0.8 2.6z"></path><path d="M4 6.6l3.2 3v2H0.8v-2z"></path><rect x="0.8" y="12" width="6.4" height="2.6"></rect></svg>
<svg width="8" height="7" style="left:729.5px;top:103.5px" viewBox="0 0 8 7" fill="#fff" stroke="#9a9a9a" stroke-width="0.7"><path d="M4 0.8l3.2 3v2.4H0.8V3.8z"></path></svg>
<div class="a" style="left:2px;top:98px;width:11.5px;height:12px;background:#fff;border:1px solid #dcdcdc"></div>
<svg width="4" height="4" style="left:5.8px;top:102.2px" viewBox="0 0 4 4" fill="none" stroke="#555" stroke-width="1"><path d="M0.5 0v3.5H4"></path></svg>
<div class="a" style="left:3px;top:111.75px;width:9.5px;height:429.5px;background:#fff"></div>
<div class="t rn" style="left:-2.40px;top:117.50px;width:20px;text-align:center;transform:rotate(-90deg)">3</div>
<div class="t rn" style="left:-2.40px;top:145.15px;width:20px;text-align:center;transform:rotate(-90deg)">4</div>
<div class="t rn" style="left:-2.40px;top:172.80px;width:20px;text-align:center;transform:rotate(-90deg)">5</div>
<div class="t rn" style="left:-2.40px;top:200.45px;width:20px;text-align:center;transform:rotate(-90deg)">6</div>
<div class="t rn" style="left:-2.40px;top:228.10px;width:20px;text-align:center;transform:rotate(-90deg)">7</div>
<div class="t rn" style="left:-2.40px;top:255.75px;width:20px;text-align:center;transform:rotate(-90deg)">8</div>
<div class="t rn" style="left:-2.40px;top:283.40px;width:20px;text-align:center;transform:rotate(-90deg)">9</div>
<div class="t rn" style="left:-2.40px;top:311.05px;width:20px;text-align:center;transform:rotate(-90deg)">10</div>
<div class="t rn" style="left:-2.40px;top:338.70px;width:20px;text-align:center;transform:rotate(-90deg)">11</div>
<div class="t rn" style="left:-2.40px;top:366.35px;width:20px;text-align:center;transform:rotate(-90deg)">12</div>
<div class="t rn" style="left:-2.40px;top:394.00px;width:20px;text-align:center;transform:rotate(-90deg)">13</div>
<div class="t rn" style="left:-2.40px;top:421.65px;width:20px;text-align:center;transform:rotate(-90deg)">14</div>
<div class="t rn" style="left:-2.40px;top:449.30px;width:20px;text-align:center;transform:rotate(-90deg)">15</div>
<div class="t rn" style="left:-2.40px;top:476.95px;width:20px;text-align:center;transform:rotate(-90deg)">16</div>
<div class="t rn" style="left:-2.40px;top:504.60px;width:20px;text-align:center;transform:rotate(-90deg)">17</div>
<div class="t rn" style="left:-2.40px;top:532.25px;width:20px;text-align:center;transform:rotate(-90deg)">18</div>
<svg width="14" height="576" style="left:0;top:0" viewBox="0 0 14 576"><g fill="#5a5a5a"><rect x="7.3" y="115.19" width="0.9" height="0.8"></rect><rect x="7.3" y="129.01" width="0.9" height="0.8"></rect><rect x="6" y="135.92" width="3.4" height="0.8"></rect><rect x="7.3" y="142.84" width="0.9" height="0.8"></rect><rect x="7.3" y="156.66" width="0.9" height="0.8"></rect><rect x="6" y="163.57" width="3.4" height="0.8"></rect><rect x="7.3" y="170.49" width="0.9" height="0.8"></rect><rect x="7.3" y="184.31" width="0.9" height="0.8"></rect><rect x="6" y="191.22" width="3.4" height="0.8"></rect><rect x="7.3" y="198.14" width="0.9" height="0.8"></rect><rect x="7.3" y="211.96" width="0.9" height="0.8"></rect><rect x="6" y="218.87" width="3.4" height="0.8"></rect><rect x="7.3" y="225.79" width="0.9" height="0.8"></rect><rect x="7.3" y="239.61" width="0.9" height="0.8"></rect><rect x="6" y="246.53" width="3.4" height="0.8"></rect><rect x="7.3" y="253.44" width="0.9" height="0.8"></rect><rect x="7.3" y="267.26" width="0.9" height="0.8"></rect><rect x="6" y="274.18" width="3.4" height="0.8"></rect><rect x="7.3" y="281.09" width="0.9" height="0.8"></rect><rect x="7.3" y="294.91" width="0.9" height="0.8"></rect><rect x="6" y="301.83" width="3.4" height="0.8"></rect><rect x="7.3" y="308.74" width="0.9" height="0.8"></rect><rect x="7.3" y="322.56" width="0.9" height="0.8"></rect><rect x="6" y="329.48" width="3.4" height="0.8"></rect><rect x="7.3" y="336.39" width="0.9" height="0.8"></rect><rect x="7.3" y="350.21" width="0.9" height="0.8"></rect><rect x="6" y="357.12" width="3.4" height="0.8"></rect><rect x="7.3" y="364.04" width="0.9" height="0.8"></rect><rect x="7.3" y="377.86" width="0.9" height="0.8"></rect><rect x="6" y="384.78" width="3.4" height="0.8"></rect><rect x="7.3" y="391.69" width="0.9" height="0.8"></rect><rect x="7.3" y="405.51" width="0.9" height="0.8"></rect><rect x="6" y="412.43" width="3.4" height="0.8"></rect><rect x="7.3" y="419.34" width="0.9" height="0.8"></rect><rect x="7.3" y="433.16" width="0.9" height="0.8"></rect><rect x="6" y="440.07" width="3.4" height="0.8"></rect><rect x="7.3" y="446.99" width="0.9" height="0.8"></rect><rect x="7.3" y="460.81" width="0.9" height="0.8"></rect><rect x="6" y="467.73" width="3.4" height="0.8"></rect><rect x="7.3" y="474.64" width="0.9" height="0.8"></rect><rect x="7.3" y="488.46" width="0.9" height="0.8"></rect><rect x="6" y="495.38" width="3.4" height="0.8"></rect><rect x="7.3" y="502.29" width="0.9" height="0.8"></rect><rect x="7.3" y="516.11" width="0.9" height="0.8"></rect><rect x="6" y="523.02" width="3.4" height="0.8"></rect><rect x="7.3" y="529.94" width="0.9" height="0.8"></rect></g></svg>
<div class="a" style="left:1012.5px;top:97px;width:11.5px;height:444.5px;background:#dcdcdc"></div>
<div class="a" style="left:1012.5px;top:97.5px;width:10.5px;height:10.5px;background:#fff;border:.6px solid #dadada"></div>
<svg width="5" height="3" style="left:1015.3px;top:101.3px" viewBox="0 0 5 3"><path d="M0 2.8h5L2.5 0z" fill="#666"></path></svg>
<div class="a" style="left:1012.5px;top:261.5px;width:10.5px;height:35.5px;background:#fff;border:.6px solid #dadada"></div>
<div class="a" style="left:1012.5px;top:530px;width:10.5px;height:10.5px;background:#fff;border:.6px solid #dadada"></div>
<svg width="5" height="3" style="left:1015.3px;top:534.3px" viewBox="0 0 5 3"><path d="M0 0h5L2.5 2.8z" fill="#666"></path></svg>
<style>
#dg text{font-family:"Liberation Sans",sans-serif;fill:#fff}
.dt{position:absolute;white-space:nowrap;color:#fff;font-family:"Liberation Sans",sans-serif;line-height:9px;height:9px}
</style>
<!-- residual text line above picture -->
<div class="a" style="left:348.6px;top:111.6px;width:2.4px;height:1.3px;background:#444;border-radius:0 0 1.2px 1.2px"></div>
<div class="a" style="left:362.4px;top:111.6px;width:2.4px;height:1.3px;background:#444;border-radius:0 0 1.2px 1.2px"></div>
<div class="a" style="left:583px;top:111.5px;width:1.2px;height:1px;background:#333"></div>
<div class="a" style="left:598.5px;top:111.5px;width:1.2px;height:1px;background:#333"></div>
<svg id="dg" width="1024" height="576" style="left:0;top:0" viewBox="0 0 1024 576">
  <defs>
    <filter id="sh" x="-10%" y="-10%" width="120%" height="130%"><feGaussianBlur in="SourceAlpha" stdDeviation="0.9"></feGaussianBlur><feOffset dx="0" dy="1.2"></feOffset><feComponentTransfer><feFuncA type="linear" slope="0.2"></feFuncA></feComponentTransfer><feMerge><feMergeNode></feMergeNode><feMergeNode in="SourceGraphic"></feMergeNode></feMerge></filter>
    <clipPath id="pc"><rect x="294" y="127" width="439.2" height="390"></rect></clipPath>
  </defs>
  <!-- picture frame -->
  <rect x="294.3" y="126.9" width="438.8" height="389.4" fill="none" stroke="#a8a8a8" stroke-width="0.6" stroke-dasharray="1 1"></rect>
  <g clip-path="url(#pc)">
    <!-- circles -->
    <circle cx="494.6" cy="317.8" r="73.3" fill="#5b9bd5" fill-opacity="0.55"></circle>
    <circle cx="615" cy="317.8" r="73.5" fill="#70ad47" fill-opacity="0.55"></circle>
    <!-- boxes -->
    <g filter="url(#sh)">
      <rect x="506.3" y="129" width="92.2" height="55" fill="#ed7d31"></rect>
      <rect x="298" y="277" width="92" height="81.5" fill="#5b9bd5"></rect>
      <rect x="298" y="392.5" width="92" height="34" rx="17" fill="#5b9bd5"></rect>
      <rect x="298" y="463" width="92" height="27" rx="13.5" fill="#ffc000"></rect>
      <rect x="506.3" y="449" width="92.2" height="55.3" fill="#ffc000"></rect>
      <rect x="725" y="129" width="30" height="55" fill="#70ad47"></rect>
      <rect x="725" y="220.2" width="60" height="34" rx="17" fill="#70ad47"></rect>
      <rect x="725" y="290" width="30" height="55.5" fill="#70ad47"></rect>
      <rect x="725" y="459.6" width="60" height="34" rx="17" fill="#70ad47"></rect>
    </g>
    <!-- connectors -->
    <g stroke-width="1.1" fill="none">
      <path d="M725 156.3H603" stroke="#ed7d31"></path>
      <path d="M421.5 317.7H395" stroke="#5b9bd5"></path>
      <path d="M344 358.5V387" stroke="#5b9bd5"></path>
      <path d="M725 317.8H694" stroke="#70ad47"></path>
      <path d="M725 476.8H604" stroke="#8fbf6c"></path>
      <path d="M344 463V432" stroke="#ffc000"></path>
      <path d="M344 517V495" stroke="#ffc000"></path>
      <path d="M395 476.8H501" stroke="#ffc000"></path>
      <path d="M552.6 504V517" stroke="#ffc000"></path>
      <path d="M552.5 318V444" stroke="#ffc000" stroke-width="1.9" stroke-dasharray="4 2.1"></path>
    </g>
    <g>
      <path d="M598.8 156.3l6.2-3.3v6.6z" fill="#ed7d31"></path>
      <path d="M390.6 317.7l6.2-3.3v6.6z" fill="#5b9bd5"></path>
      <path d="M344 392l-3.3-6.2h6.6z" fill="#5b9bd5"></path>
      <path d="M689 317.8l6.2-3.3v6.6z" fill="#70ad47"></path>
      <path d="M599 476.8l6.2-3.3v6.6z" fill="#70ad47"></path>
      <path d="M344 427.3l-3.3 6.2h6.6z" fill="#ffc000"></path>
      <path d="M344 490.5l-3.3 6.2h6.6z" fill="#ffc000"></path>
      <path d="M390.6 476.8l6.2-3.3v6.6z" fill="#ffc000"></path>
      <path d="M505.8 476.8l-6.2-3.3v6.6z" fill="#ffc000"></path>
      <path d="M552.5 449.2l-4.4-5.4h8.8z" fill="#ffc000"></path>
    </g>
  </g>
  <!-- handles -->
  <g fill="#666">
    <rect x="293.9" y="126.8" width="3.8" height="3.8"></rect>
    <rect x="512.1" y="126.8" width="3.8" height="3.8"></rect>
    <rect x="730.2" y="126.8" width="3.8" height="3.8"></rect>
    <rect x="293.9" y="319.8" width="3.8" height="3.8"></rect>
    <rect x="730.2" y="319.8" width="3.8" height="3.8"></rect>
    <rect x="293.9" y="513.6" width="3.8" height="3.8"></rect>
    <rect x="512.1" y="513.6" width="3.8" height="3.8"></rect>
    <rect x="730.2" y="513.6" width="3.8" height="3.8"></rect>
  </g>
</svg>
<!-- diagram text -->
<div class="dt" style="top: 147.5px; font-size: 6.6px; font-weight: bold; left: 515.5px; transform: scaleX(0.992); transform-origin: 0px 50%;">INDUSTRIAL ECOLOGY</div>
<div class="dt" style="top: 155.7px; font-size: 6.8px; opacity: 0.92; left: 525px; letter-spacing: 0.18px;">Holistic approach</div>
<div class="dt" style="top: 284.5px; font-size: 6.6px; font-weight: bold; left: 308.8px; letter-spacing: 0.01px;">PLANNING THEORIES</div>
<div class="a" style="left:300.3px;top:304.8px;width:1.6px;height:1.6px;border-radius:50%;background:#fff"></div>
<div class="a" style="left:300.3px;top:337.3px;width:1.6px;height:1.6px;border-radius:50%;background:#fff"></div>
<div class="dt" style="top: 301px; font-size: 6.8px; opacity: 0.92; left: 317.2px; letter-spacing: 0.12px;">Rational</div>
<div class="dt" style="top: 309px; font-size: 6.8px; opacity: 0.92; left: 317px; letter-spacing: 0.24px;">comprehensive</div>
<div class="dt" style="top: 317px; font-size: 6.8px; opacity: 0.92; left: 317px; letter-spacing: 0.27px;">planning theory</div>
<div class="dt" style="top: 333.5px; font-size: 6.8px; opacity: 0.92; left: 317px; letter-spacing: 0.2px;">Communicative</div>
<div class="dt" style="top: 341.5px; font-size: 6.8px; opacity: 0.92; left: 317px; letter-spacing: 0.27px;">planning theory</div>
<div class="dt" style="top: 400.7px; font-size: 6.8px; opacity: 0.95; left: 302.5px; letter-spacing: 0.16px;">Comprehensive integrated</div>
<div class="dt" style="top: 409px; font-size: 6.8px; opacity: 0.95; left: 319.5px; letter-spacing: 0.22px;">planning theory</div>
<div class="dt" style="top: 467.7px; font-size: 6.6px; font-style: italic; opacity: 0.95; left: 302px; transform: scaleX(0.992); transform-origin: 0px 50%;">“Sustainable Comprehensive</div>
<div class="dt" style="top: 476px; font-size: 6.6px; font-style: italic; opacity: 0.95; left: 303px; letter-spacing: 0.12px;">Master Planning” approach</div>
<div class="dt" style="top: 464px; font-size: 6.4px; font-weight: bold; left: 509px; letter-spacing: 0.13px;">INTEGRATION RESILIENCE</div>
<div class="dt" style="top: 472px; font-size: 6.4px; font-weight: bold; left: 517.5px; letter-spacing: 0.35px;">THINKING IN URBAN</div>
<div class="dt" style="top: 480px; font-size: 6.4px; font-weight: bold; left: 534px; letter-spacing: 0.52px;">PLANNING</div>
<div class="dt" style="top: 303.4px; font-size: 12.1px; font-weight: bold; line-height: 14px; height: 14px; left: 474.5px; transform: scaleX(0.927); transform-origin: 0px 50%;">URBAN</div>
<div class="dt" style="top: 317.1px; font-size: 12.1px; font-weight: bold; line-height: 14px; height: 14px; left: 464px; transform: scaleX(0.974); transform-origin: 0px 50%;">PLANNING</div>
<div class="dt" style="top: 303.4px; font-size: 12.1px; font-weight: bold; line-height: 14px; height: 14px; left: 594.5px; transform: scaleX(0.927); transform-origin: 0px 50%;">URBAN</div>
<div class="dt" style="top: 317.1px; font-size: 12.1px; font-weight: bold; line-height: 14px; height: 14px; left: 583px; transform: scaleX(0.882); transform-origin: 0px 50%;">RESILIENCE</div>
<div class="a" style="left:728.5px;top:156.5px;width:4px;height:6px;overflow:hidden;color:#fff;font-size:6.6px;line-height:6px;opacity:.9">C</div>
<!-- Methodology heading -->
<div class="t" style="top: 528.7px; font-family: &quot;DejaVu Serif&quot;, &quot;Liberation Serif&quot;, serif; font-weight: bold; font-size: 10px; line-height: 13px; height: 13px; color: rgb(17, 17, 17); left: 294px; transform: scaleX(0.898); transform-origin: 0px 50%;">Methodology</div>
<div id="status" class="a">
  <div class="t" style="left: 4px; transform: scaleX(0.813); transform-origin: 0px 50%;">Page 3 of 6</div>
  <div class="t" style="left: 47.5px; transform: scaleX(0.839); transform-origin: 0px 50%;">1619 words</div>
  <svg width="10" height="9" style="left:92.5px;top:1.5px" viewBox="0 0 10 9" fill="none" stroke="#666" stroke-width="0.8"><path d="M0.5 0.8h3.6v7H0.5zM4.1 0.8h4.4v7H4.1z"></path><path d="M6.4 4.4l2.6 2.6M9 4.4L6.4 7" stroke="#444"></path></svg>
  <div class="t" style="left: 110.3px; transform: scaleX(0.831); transform-origin: 0px 50%;">English (United Kingdom)</div>
  <div class="t" style="left: 197.8px; transform: scaleX(0.802); transform-origin: 0px 50%;">Recovered</div>
  <svg width="10" height="8" style="left:855.5px;top:2px" viewBox="0 0 10 8" fill="#e2e2e2" stroke="#a0a0a0" stroke-width="0.8"><path d="M0.5 0.5h4v7h-4zM5.5 0.5h4v7h-4z"></path></svg>
  <div class="a" style="left:870.5px;top:0;width:19px;height:14px;background:#cfcfcf"></div>
  <svg width="9" height="9" style="left:875.5px;top:1.5px" viewBox="0 0 9 9" fill="#dedede" stroke="#8e8e8e" stroke-width="0.8"><rect x="0.5" y="0.5" width="8" height="8"></rect><rect x="2.2" y="2.2" width="4.6" height="4.6" fill="#bbb" stroke="none"></rect></svg>
  <svg width="10" height="9" style="left:895.5px;top:1.5px" viewBox="0 0 10 9" fill="#f6f6f6" stroke="#8e8e8e" stroke-width="0.8"><rect x="0.5" y="0.5" width="7" height="7.4"></rect><path d="M2 2.6h4M2 4.4h3"></path><circle cx="7" cy="6.4" r="2.2" fill="#ddd"></circle></svg>
  <div class="a" style="left:912.5px;top:5.7px;width:5px;height:1.5px;background:#555"></div>
  <div class="a" style="left:920px;top:6px;width:66.5px;height:1px;background:#c0c0c0"></div>
  <div class="a" style="left:952.8px;top:2.5px;width:2.8px;height:8px;background:#5a5a5a;border-radius:.6px"></div>
  <div class="a" style="left:989px;top:5.7px;width:6.2px;height:1.5px;background:#555"></div>
  <div class="a" style="left:991.3px;top:3.3px;width:1.5px;height:6.2px;background:#555"></div>
  <div class="t" style="left: 1003px; transform: scaleX(0.801); transform-origin: 0px 50%;">110%</div>
</div>
<div id="taskbar" class="a" style="top:556.2px;height:20px;background:#05060c">
<svg width="1024" height="20" style="left:0;top:0" viewBox="0 0 1024 20"><defs><filter id="tb" x="0" y="0" width="100%" height="100%" color-interpolation-filters="sRGB"><feTurbulence type="fractalNoise" baseFrequency="0.12 0.3" numOctaves="3" seed="7" result="n"></feTurbulence><feColorMatrix in="n" type="matrix" values="0 0 0 0 0.06  0 0 0 0 0.08  0 0 0 0 0.17  2.2 0 0 0 -0.92"></feColorMatrix></filter></defs><rect x="0" y="0" width="1024" height="20" filter="url(#tb)"></rect></svg>
<svg width="11" height="11" style="left:6.6px;top:4.0px" viewBox="0 0 11 11" fill="#fff"><path d="M0 1.6l4.6-0.7v4.3H0zM5.3 0.8L11 0v5.2H5.3zM0 5.9h4.6v4.3L0 9.5zM5.3 5.9H11V11l-5.7-0.8z"></path></svg>
<svg width="11" height="11" style="left:30.5px;top:4.0px" viewBox="0 0 11 11" fill="none" stroke="#fff" stroke-width="1"><circle cx="7" cy="4" r="3.3"></circle><path d="M4.6 6.4L0.6 10.4"></path></svg>
<svg width="14" height="9" style="left:52.8px;top:5.0px" viewBox="0 0 14 9" fill="none" stroke="#c8c8c8" stroke-width="1.1"><rect x="2.8" y="0.6" width="8.4" height="7.8" rx="1"></rect><path d="M2.6 2H0.6v5h2M11.4 2h2v5h-2"></path></svg>
<svg width="11" height="10" style="left:80.5px;top:4.5px" viewBox="0 0 11 10"><path d="M0.3 1h4l1 1.2h5.4V9H0.3z" fill="#f6cf57"></path><rect x="0.3" y="3.4" width="10.4" height="5.6" fill="#fbe08a"></rect><rect x="2.6" y="5.6" width="5.8" height="3.4" fill="#3a97dd"></rect><rect x="4" y="7.4" width="3" height="1.6" fill="#fbe08a"></rect></svg>
<div class="a" style="left:77.3px;top:18.4px;width:18.5px;height:1.6px;background:#b9bbee"></div>
<svg width="11" height="11" style="left:105px;top:4.0px" viewBox="0 0 11 11"><circle cx="5.2" cy="5.2" r="5" fill="#f5a623"></circle><circle cx="5.2" cy="5" r="2.6" fill="none" stroke="#fde7b8" stroke-width="1"></circle><path d="M7 7l3 3" stroke="#7a3b12" stroke-width="1.8"></path></svg>
<svg width="11" height="11" style="left:129.5px;top:4.0px" viewBox="0 0 11 11"><circle cx="5.5" cy="5.5" r="5.3" fill="#dd4b39"></circle><path d="M5.5 5.5L0.9 2.9A5.3 5.3 0 0 0 4.4 10.7z" fill="#2fa84f"></path><path d="M5.5 5.5L4.4 10.7A5.3 5.3 0 0 0 10.6 4z" fill="#f9c513"></path><circle cx="5.5" cy="5.5" r="2.5" fill="#fff"></circle><circle cx="5.5" cy="5.5" r="1.9" fill="#4a8af4"></circle></svg>
<div class="a" style="left:126.2px;top:18.4px;width:18.8px;height:1.6px;background:#b9bbee"></div>
<svg width="11" height="11" style="left:154.2px;top:4.0px" viewBox="0 0 11 11"><circle cx="5.5" cy="5.5" r="5.3" fill="#6db33f"></circle><path d="M3.4 2.8v3.4a2.1 2.1 0 0 0 4.2 0V2.8" fill="none" stroke="#fff" stroke-width="1.3"></path><path d="M7.6 6v2.6" stroke="#fff" stroke-width="1.1"></path></svg>
<svg width="11" height="11" style="left:179px;top:4.0px" viewBox="0 0 11 11"><rect x="0" y="0.4" width="11" height="10.2" rx="1" fill="#b5152b"></rect><path d="M1.6 6.8c0.6-2.6 2-2.6 2.6-0.4 0.5 1.6 2 1.6 2.6 0 0.6-2.2 2-2.2 2.6 0.4" fill="none" stroke="#fff" stroke-width="1.3"></path></svg>
<div class="a" style="left:175px;top:18.4px;width:19.0px;height:1.6px;background:#b9bbee"></div>
<svg width="11" height="11" style="left:203.2px;top:4.0px" viewBox="0 0 11 11"><circle cx="5.5" cy="5.5" r="5.3" fill="#1ed760"></circle><path d="M2.4 4c2.2-0.7 4.4-0.5 6.4 0.5M2.8 5.9c1.8-0.5 3.6-0.3 5.2 0.5M3.2 7.6c1.4-0.4 2.8-0.2 4 0.4" fill="none" stroke="#0a0a0a" stroke-width="0.9" stroke-linecap="round"></path></svg>
<div class="a" style="left:199.7px;top:18.4px;width:18.6px;height:1.6px;background:#b9bbee"></div>
<svg width="11" height="11" style="left:227.8px;top:4.0px" viewBox="0 0 11 11"><path d="M0.6 2.6l9-2 0.4 1.6-9 2z" fill="#ddd"></path><rect x="0.8" y="3.8" width="9.6" height="6.6" fill="#e8e8e8"></rect><rect x="1.6" y="5" width="2.2" height="4.4" fill="#e8732c"></rect><rect x="4.4" y="5" width="2.2" height="4.4" fill="#6db33f"></rect><rect x="7.2" y="5" width="2.2" height="4.4" fill="#3a97dd"></rect></svg>
<div class="a" style="left:246px;top:0;width:24px;height:20px;background:#3b3d45"></div>
<svg width="12" height="11" style="left:252px;top:4.0px" viewBox="0 0 12 11"><rect x="4.6" y="1" width="7" height="9" fill="#fff"></rect><path d="M6.4 3h4.2M6.4 5h4.2M6.4 7h4.2" stroke="#2b579a" stroke-width="0.8" opacity="0.7"></path><path d="M0 1.2L6.6 0v11L0 9.8z" fill="#2b579a"></path><text x="3.3" y="7.8" font-family="Liberation Sans,sans-serif" font-size="6" font-weight="bold" fill="#fff" text-anchor="middle">W</text></svg>
<div class="a" style="left:246px;top:18.4px;width:24.0px;height:1.6px;background:#b9bbee"></div>
<svg width="12" height="11" style="left:276.5px;top:4.0px" viewBox="0 0 12 11"><rect x="4.6" y="1" width="7" height="9" fill="#fff"></rect><path d="M6.4 3h4.2M6.4 5h4.2M6.4 7h4.2" stroke="#3955a3" stroke-width="0.8" opacity="0.7"></path><path d="M0 1.2L6.6 0v11L0 9.8z" fill="#3955a3"></path><text x="3.3" y="7.8" font-family="Liberation Sans,sans-serif" font-size="6" font-weight="bold" fill="#fff" text-anchor="middle">V</text></svg>
<div class="a" style="left:273px;top:18.4px;width:19.0px;height:1.6px;background:#b9bbee"></div>
<svg width="12" height="11" style="left:301px;top:4.0px" viewBox="0 0 12 11"><rect x="4.6" y="1" width="7" height="9" fill="#fff"></rect><path d="M6.4 3h4.2M6.4 5h4.2M6.4 7h4.2" stroke="#1e7145" stroke-width="0.8" opacity="0.7"></path><path d="M0 1.2L6.6 0v11L0 9.8z" fill="#1e7145"></path><text x="3.3" y="7.8" font-family="Liberation Sans,sans-serif" font-size="6" font-weight="bold" fill="#fff" text-anchor="middle">X</text></svg>
<svg width="12" height="11" style="left:325.5px;top:4.0px" viewBox="0 0 12 11"><rect x="4.6" y="1" width="7" height="9" fill="#fff"></rect><path d="M6.4 3h4.2M6.4 5h4.2M6.4 7h4.2" stroke="#0072c6" stroke-width="0.8" opacity="0.7"></path><path d="M0 1.2L6.6 0v11L0 9.8z" fill="#0072c6"></path><text x="3.3" y="7.8" font-family="Liberation Sans,sans-serif" font-size="6" font-weight="bold" fill="#fff" text-anchor="middle">O</text></svg>
<div class="a" style="left:322.4px;top:18.4px;width:18.4px;height:1.6px;background:#b9bbee"></div>
<svg width="11" height="11" style="left:349.8px;top:4.0px" viewBox="0 0 11 11"><rect x="0" y="0.2" width="11" height="10.6" rx="1" fill="#8e2a8c"></rect><path d="M7.6 3.6a2.6 2.6 0 1 0 0.4 3.2H5.6" fill="none" stroke="#fff" stroke-width="1.4"></path></svg>
<div class="a" style="left:346.6px;top:18.4px;width:19.0px;height:1.6px;background:#b9bbee"></div>
<svg width="11" height="11" style="left:374.8px;top:4.0px" viewBox="0 0 11 11"><circle cx="5.5" cy="5.5" r="5.2" fill="#dfe9f2"></circle><path d="M1.4 4c1-2.4 4-3.4 6-2.2 1 0.8-0.6 2-1.8 2.2-1.4 0.2-1.6 1.8-0.8 2.8 0.8 1 0.4 2.4-0.8 2.6C2 9 0.6 6.4 1.4 4z" fill="#3e9b4f"></path><path d="M7.4 5.2c1.2-0.6 2.6 0 2.8 1.2-0.2 1.6-1.4 2.8-2.8 3.4-0.6-1.4-0.8-3.4 0-4.6z" fill="#3b7fc4"></path></svg>
<div class="a" style="left:371.4px;top:18.4px;width:18.5px;height:1.6px;background:#b9bbee"></div>
<svg width="12" height="10" style="left:399px;top:4.5px" viewBox="0 0 12 10"><rect x="2.6" y="0.4" width="7.4" height="5.6" fill="#eef3f8" stroke="#b8c2cc" stroke-width="0.5"></rect><rect x="3.6" y="1.6" width="5" height="3.2" fill="#8ec1ea"></rect><path d="M0.6 4.4h8.6l1.4 1.6v3H0.6z" fill="#d4d8dc"></path><rect x="2" y="6.8" width="6" height="2.6" fill="#f4f4f4"></rect></svg>
<div class="a" style="left:396px;top:18.4px;width:18.5px;height:1.6px;background:#b9bbee"></div>
<svg width="12" height="12" style="left:423.5px;top:3.0px" viewBox="0 0 12 12"><ellipse cx="5.4" cy="7.4" rx="5" ry="4" fill="#e9eef3"></ellipse><circle cx="3" cy="7" r="1.1" fill="#e04a3a"></circle><circle cx="5.2" cy="9.2" r="1.1" fill="#3a97dd"></circle><circle cx="7.6" cy="8.2" r="1.1" fill="#6db33f"></circle><path d="M5.6 6.6L10.6 1" stroke="#f0a030" stroke-width="1.3"></path><path d="M10.2 0.4l1.4 1.2" stroke="#f6cf57" stroke-width="1.2"></path></svg>
<div class="a" style="left:420.6px;top:18.4px;width:18.4px;height:1.6px;background:#b9bbee"></div>
<svg width="8" height="5" style="left:829.5px;top:7.5px" viewBox="0 0 8 5" fill="none" stroke="#fff" stroke-width="0.9"><path d="M0.5 4.4L4 0.8l3.5 3.6"></path></svg>
<svg width="10" height="10" style="left:844.8px;top:4.5px" viewBox="0 0 10 10"><circle cx="5" cy="5" r="4.8" fill="#1ed760"></circle><path d="M2.2 3.6c2-0.6 4-0.4 5.8 0.5M2.6 5.4c1.6-0.5 3.2-0.3 4.6 0.4M3 7c1.2-0.3 2.4-0.2 3.4 0.3" fill="none" stroke="#0a0a0a" stroke-width="0.8" stroke-linecap="round"></path></svg>
<svg width="10" height="10" style="left:861px;top:4.5px" viewBox="0 0 10 10"><circle cx="4.8" cy="4.8" r="4.6" fill="#e8e8e8"></circle><path d="M4.8 0.2A4.6 4.6 0 0 0 0.2 4.8H4.8z" fill="#4aa84a"></path><path d="M4.8 0.2A4.6 4.6 0 0 1 9.4 4.8H4.8z" fill="#d9d9d9"></path><rect x="5.4" y="5.4" width="4" height="4.4" fill="#f0c040"></rect><rect x="6.2" y="4.4" width="2.4" height="1.6" fill="none" stroke="#888" stroke-width="0.6"></rect></svg>
<svg width="11" height="10" style="left:876.5px;top:4.5px" viewBox="0 0 12 11"><rect x="4.6" y="1" width="7" height="9" fill="#fff"></rect><path d="M6.8 3.4l2.2 1.8 2.2-1.8" stroke="#0072c6" stroke-width="0.8" fill="none"></path><path d="M0 1.2L6.6 0v11L0 9.8z" fill="#0072c6"></path><text x="3.3" y="7.8" font-family="Liberation Sans,sans-serif" font-size="6" font-weight="bold" fill="#fff" text-anchor="middle">O</text></svg>
<svg width="11" height="8" style="left:892.5px;top:5.5px" viewBox="0 0 11 8"><rect x="1.2" y="2" width="8.6" height="4.6" fill="#fff"></rect><rect x="9.8" y="3.2" width="1" height="2.2" fill="#fff"></rect><path d="M0.6 1.6l2-1.2v2.4z" fill="#fff"></path><path d="M1.6 0.8v2" stroke="#fff" stroke-width="0.7"></path></svg>
<svg width="11" height="10" style="left:908.5px;top:4.5px" viewBox="0 0 11 10" fill="none" stroke="#fff" stroke-width="0.9"><rect x="2.6" y="0.6" width="7.8" height="6"></rect><path d="M5 9.2h3.6M6.6 6.6v2.6"></path><rect x="0.5" y="3" width="2.6" height="5.4" fill="#05060c"></rect></svg>
<svg width="10" height="9" style="left:924px;top:5.0px" viewBox="0 0 10 9" fill="none" stroke="#fff" stroke-width="0.8"><path d="M0.5 3.2h1.8L4.6 1v7L2.3 5.8H0.5z"></path><path d="M6 3c0.8 0.8 0.8 2.2 0 3M7.4 1.8c1.4 1.6 1.4 3.8 0 5.4" stroke-width="0.7" opacity="0.85"></path></svg>
<div class="t" style="top: 4.7px; color: rgb(255, 255, 255); font-size: 8.8px; left: 942.3px; transform: scaleX(0.771); transform-origin: 0px 50%;">ENG</div>
<div class="t" style="top: 4.7px; color: rgb(255, 255, 255); font-size: 8.8px; left: 966.8px; transform: scaleX(0.827); transform-origin: 0px 50%;">15:58</div>
<svg width="11" height="11" style="left:997px;top:4.3px" viewBox="0 0 11 11"><path d="M0.4 0.6h10.2v7.6H6L3.4 10.6V8.2H0.4z" fill="#fff"></path><path d="M2.4 3h6.2M2.4 5h6.2" stroke="#05060c" stroke-width="0.8"></path></svg>
</div>


</body></html>
